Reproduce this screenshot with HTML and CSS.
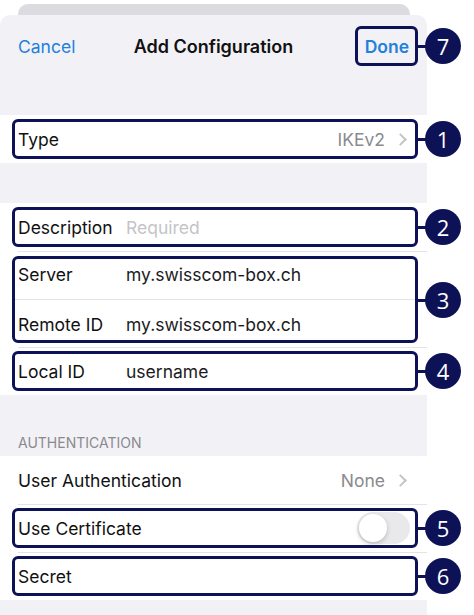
FILE: index.html
```html
<!DOCTYPE html>
<html>
  <head>
    <title>Add Configuration</title>
    <link rel="stylesheet" href="styles.css">
  </head>
  <body>
    <div class="screen">
      <div class="back-card"></div>

      <div class="sheet">
        <div class="nav">
          <span class="nav-cancel">Cancel</span>
          <span class="nav-title">Add Configuration</span>
          <span class="nav-done-wrap">
            <span class="outline nav-done">Done<span class="badge">7</span></span>
          </span>
        </div>

        <div class="group">
          <div class="block">
            <div class="outline">
              <div class="row">
                <span class="label">Type</span>
                <span class="detail">IKEv2</span>
                <span class="chevron"></span>
              </div>
              <span class="badge">1</span>
            </div>
          </div>
        </div>

        <div class="gap"></div>

        <div class="group">
          <div class="block">
            <div class="outline">
              <div class="row">
                <span class="label">Description</span>
                <span class="value placeholder">Required</span>
              </div>
              <span class="badge">2</span>
            </div>
          </div>
          <div class="block">
            <div class="outline outline-double">
              <div class="row row-first">
                <span class="label">Server</span>
                <span class="value">my.swisscom-box.ch</span>
              </div>
              <div class="row row-split">
                <span class="label">Remote ID</span>
                <span class="value">my.swisscom-box.ch</span>
              </div>
              <span class="badge">3</span>
            </div>
          </div>
          <div class="block">
            <div class="outline">
              <div class="row">
                <span class="label">Local ID</span>
                <span class="value">username</span>
              </div>
              <span class="badge">4</span>
            </div>
          </div>
        </div>

        <div class="gap gap-caption">
          <span class="caption">AUTHENTICATION</span>
        </div>

        <div class="group">
          <div class="block">
            <div class="row row-plain">
              <span class="label">User Authentication</span>
              <span class="detail">None</span>
              <span class="chevron"></span>
            </div>
          </div>
          <div class="block">
            <div class="outline">
              <div class="row">
                <span class="label">Use Certificate</span>
                <span class="switch"><span class="switch-knob"></span></span>
              </div>
              <span class="badge">5</span>
            </div>
          </div>
          <div class="block">
            <div class="outline">
              <div class="row">
                <span class="label">Secret</span>
              </div>
              <span class="badge">6</span>
            </div>
          </div>
        </div>

        <div class="gap gap-bottom"></div>
      </div>
    </div>
  </body>
</html>
```

FILE: styles.css
```css
body {
  margin: 0;
  background-color: white;
  font-family: Inter, "Liberation Sans", sans-serif;
  color: #111;
}
.screen {
  width: 427px;
  padding-top: 4px;
}
.back-card {
  height: 11px;
  margin: 0 17px 0 18px;
  background-color: #dcdbe0;
  border-radius: 10px 10px 0 0;
}
.sheet {
  background-color: #f2f1f6;
  border-radius: 10px 10px 0 0;
}
.nav {
  display: grid;
  grid-template-columns: 1fr auto 1fr;
  align-items: center;
  height: 40px;
  padding: 11px 18px 49px 18px;
  font-size: 17.5px;
}
.nav-cancel {
  color: #2280dc;
}
.nav-title {
  font-weight: 600;
  font-size: 18px;
}
.nav-done-wrap {
  display: flex;
  justify-content: flex-end;
  margin-right: -9px;
}
.group {
  background-color: white;
}
.block {
  display: flow-root;
}
.block + .block {
  background: linear-gradient(#e4e4e8, #e4e4e8) 18px 0 / calc(100% - 18px) 1px no-repeat, white;
}
.gap {
  height: 40px;
}
.gap-caption {
  height: 61px;
  box-sizing: border-box;
  padding: 37px 0 0 18px;
}
.gap-bottom {
  height: 15px;
}
.caption {
  font-size: 14px;
  line-height: 16px;
  color: #8a8a8e;
}
.outline {
  position: relative;
  margin: 4px 9px 4px 12px;
  border: 3px solid #0d1256;
  border-radius: 6px;
}
.outline-double {
  margin-top: 5px;
}
.outline.nav-done {
  display: flex;
  align-items: center;
  height: 34px;
  padding: 0 6px 0 7px;
  margin: 0;
  color: #2280dc;
  font-weight: 600;
}
.outline::after {
  content: "";
  position: absolute;
  left: calc(100% + 3px);
  top: 50%;
  width: 9px;
  height: 3px;
  margin-top: -1px;
  background-color: #0d1256;
}
.badge {
  position: absolute;
  left: calc(100% + 10px);
  top: 50%;
  width: 36px;
  height: 36px;
  margin-top: -18px;
  border-radius: 50%;
  background-color: #0d1256;
  color: white;
  font-family: "Open Sans", sans-serif;
  font-size: 22px;
  font-weight: 500;
  line-height: 36px;
  text-align: center;
}
.row {
  display: flex;
  align-items: center;
  height: 34px;
  padding: 0 8px 0 3px;
  font-size: 17.5px;
}
.row-first {
  height: 30px;
  padding-bottom: 10px;
}
.row-split {
  height: 32px;
  padding-top: 8px;
  border-top: 1px solid #e4e4e8;
}
.row-plain {
  height: 48px;
  padding: 0 20px 0 18px;
}
.label {
  width: 108px;
  flex-shrink: 0;
  white-space: nowrap;
}
.row-plain .label {
  width: auto;
}
.value {
  color: #1c1c1e;
}
.placeholder {
  color: #c4c4c7;
}
.detail {
  margin-left: auto;
  color: #8a8a8e;
}
.chevron {
  width: 7px;
  height: 7px;
  margin: 0 2px 0 11px;
  border-top: 2px solid #c4c4c7;
  border-right: 2px solid #c4c4c7;
  transform: rotate(45deg);
}
.switch {
  position: relative;
  margin-left: auto;
  margin-right: -3px;
  width: 53px;
  height: 32px;
  border-radius: 16px;
  background-color: #e9e9eb;
}
.switch-knob {
  position: absolute;
  left: 2px;
  top: 2px;
  width: 28px;
  height: 28px;
  border-radius: 50%;
  background-color: white;
  box-shadow: 0 2px 5px rgba(0, 0, 0, 0.2);
}
```
